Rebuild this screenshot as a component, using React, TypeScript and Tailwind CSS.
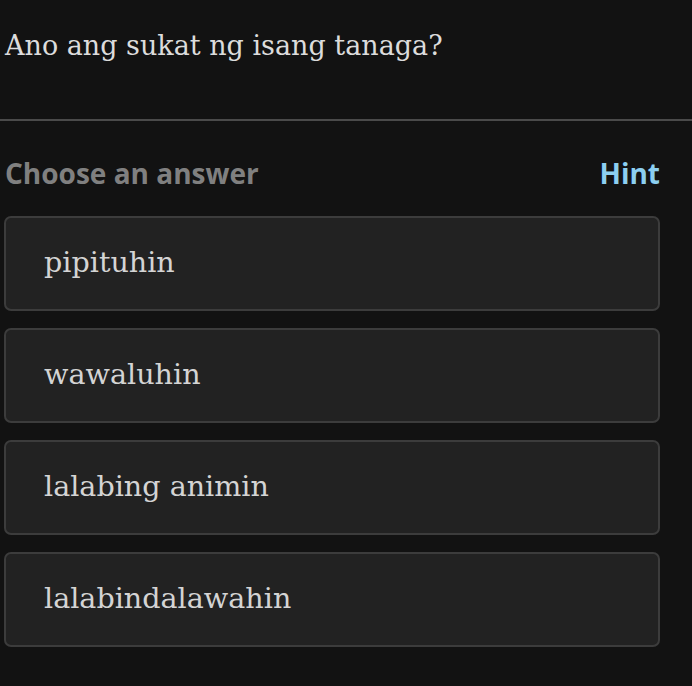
import React from "react";

const options = ["pipituhin", "wawaluhin", "lalabing animin", "lalabindalawahin"];

export default function App() {
  return (
    <div className="w-[692px] h-[686px] bg-[#121212] overflow-hidden">
      <div className="pt-[26px] pl-[5px] h-[119px]">
        <h1 className="text-[27px] leading-[40px] text-[#dcdcdc] [font-family:'DejaVu_Serif',serif]">
          Ano ang sukat ng isang tanaga?
        </h1>
      </div>
      <div className="h-[2px] bg-[#4a4a4a]" />
      <div className="w-[660px] pl-[5px] mt-[34px] flex items-center justify-between [font-family:'Open_Sans',sans-serif]">
        <span className="text-[28px] leading-[36px] font-bold text-[#808080]">Choose an answer</span>
        <span className="text-[28px] leading-[36px] font-bold text-[#8ccff0]">Hint</span>
      </div>
      <div className="mt-[25px] ml-[4px] w-[656px] flex flex-col gap-[17px]">
        {options.map((o) => (
          <div
            key={o}
            className="h-[95px] rounded-[7px] border-2 border-[#3c3c3c] bg-[#222222] flex items-center pl-[38px] pb-[2px] text-[28.6px] text-[#d4d4d4] [font-family:'DejaVu_Serif',serif]"
          >
            {o}
          </div>
        ))}
      </div>
    </div>
  );
}
